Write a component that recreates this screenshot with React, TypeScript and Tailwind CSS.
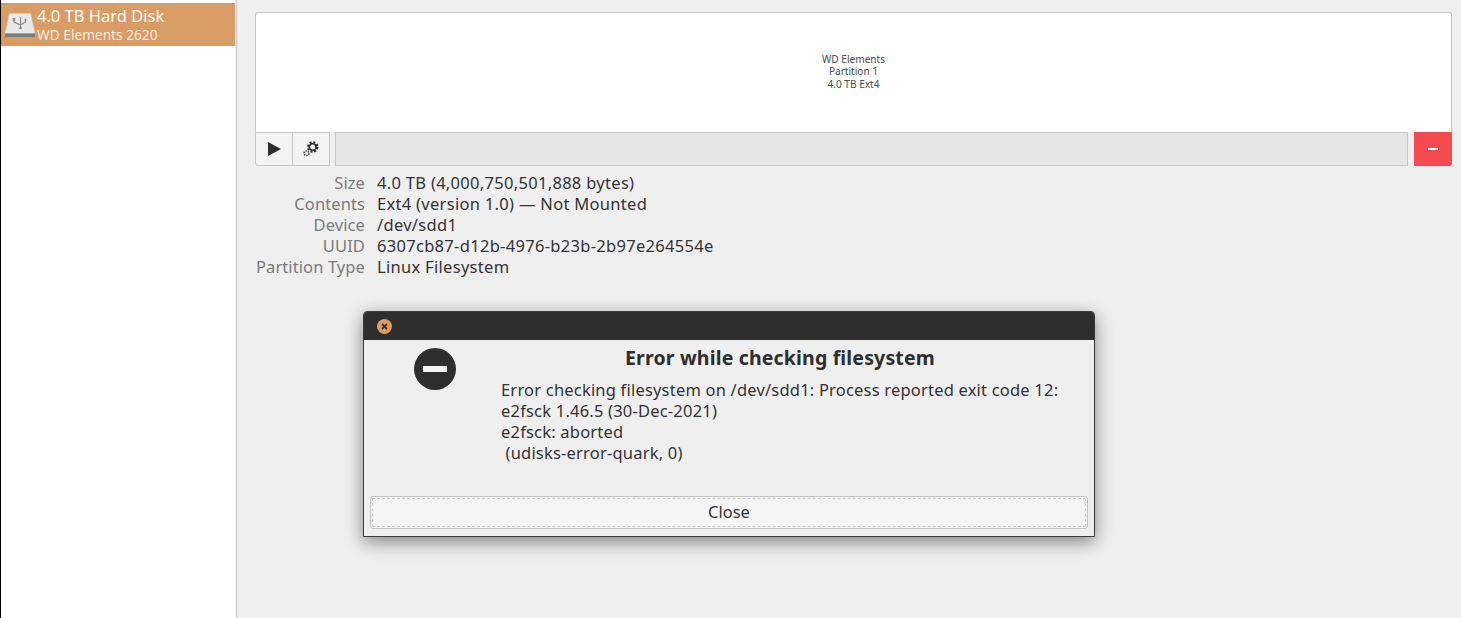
import React from 'react';

const FONT = "font-['Noto_Sans','Open_Sans',sans-serif]";

const details: [string, string][] = [
  ['Size', '4.0 TB (4,000,750,501,888 bytes)'],
  ['Contents', 'Ext4 (version 1.0) — Not Mounted'],
  ['Device', '/dev/sdd1'],
  ['UUID', '6307cb87-d12b-4976-b23b-2b97e264554e'],
  ['Partition Type', 'Linux Filesystem'],
];

const DriveIcon = () => (
  <svg width="32" height="28" viewBox="0 0 32 28" className="shrink-0">
    <path d="M5.500 2.500h21l4.500 20H1z" fill="#e8e8e8" stroke="#d4d4d4" strokeWidth="0.6" />
    <rect x="1" y="22.500" width="30" height="3.500" rx="1" fill="#7a7a7a" />
    <path d="M16.500 6v10M10 8.500v2.500l6.500 3 5-3V9" fill="none" stroke="#8a8a8a" strokeWidth="1.2" />
    <circle cx="16.500" cy="17" r="1.300" fill="#8a8a8a" />
    <rect x="8.800" y="7" width="2.400" height="2.400" fill="#8a8a8a" />
    <circle cx="21.500" cy="8.500" r="1.100" fill="#8a8a8a" />
  </svg>
);

const GearsIcon = () => (
  <svg width="16" height="16" viewBox="0 0 16 16">
    <circle cx="9.700" cy="6" r="4.600" fill="none" stroke="#2d2d2d" strokeWidth="2.400" strokeDasharray="2 1.610" />
    <circle cx="9.700" cy="6" r="3.300" fill="none" stroke="#2d2d2d" strokeWidth="1.600" />
    <circle cx="3.500" cy="12.300" r="2.300" fill="none" stroke="#444" strokeWidth="1.700" strokeDasharray="1.300 0.900" />
  </svg>
);

const PlayIcon = () => (
  <svg width="13" height="14" viewBox="0 0 13 14">
    <path d="M0 0l13 7-13 7z" fill="#2d2d2d" />
  </svg>
);

const CloseDot = () => (
  <svg width="15" height="15" viewBox="0 0 15 15">
    <circle cx="7.500" cy="7.500" r="7.500" fill="#db9a5f" />
    <path d="M5 5l5 5M10 5l-5 5" stroke="#3a3026" strokeWidth="1.800" />
  </svg>
);

export default function App() {
  return (
    <div className={`${FONT} relative flex h-[618px] w-[1461px] overflow-hidden bg-[#efefef] text-[#3d3d3d]`}>
      {/* Sidebar */}
      <aside className="w-[237px] shrink-0 border-l border-r border-l-black border-r-[#c4c4c4] bg-white pt-[3px]">
        <div className="flex h-[43px] w-[234px] items-center gap-[1px] bg-[#da9c65] pl-[3px] text-white">
          <DriveIcon />
          <div className="flex flex-col">
            <span className="text-[16.5px] leading-[20px]">4.0 TB Hard Disk</span>
            <span className="text-[13.7px] leading-[18px] text-[#f8ece0]">WD Elements 2620</span>
          </div>
        </div>
      </aside>

      {/* Main */}
      <main className="flex-1 pl-[18px] pr-[9px] pt-[12px]">
        <div className="flex h-[120px] flex-col items-center rounded-t-[3px] border border-b-0 border-[#c6c6c6] bg-white pt-[40px] text-[10.1px] leading-[12.4px] text-[#4a4a4a]">
          <span>WD Elements</span>
          <span>Partition 1</span>
          <span>4.0 TB Ext4</span>
        </div>

        <div className="flex h-[34px] items-stretch">
          <div className="flex rounded-bl-[3px] border border-[#c6c6c6] bg-[#f3f3f3]">
            <div className="flex w-[37px] items-center justify-center border-r border-[#c6c6c6]">
              <PlayIcon />
            </div>
            <div className="flex w-[36px] items-center justify-center">
              <GearsIcon />
            </div>
          </div>
          <div className="ml-[5px] flex-1 border border-[#c6c6c6] bg-[#e6e6e6]" />
          <div className="ml-[6px] flex w-[38px] items-center justify-center rounded-br-[3px] bg-[#f44a50]">
            <div className="h-[2px] w-[10px] bg-white" />
          </div>
        </div>

        <dl className="mt-[6px] grid grid-cols-[110px_1fr] gap-x-[12px] text-[16.5px] leading-[21px]">
          {details.map(([label, value]) => (
            <React.Fragment key={label}>
              <dt className="text-right text-[#7b7b7b] tracking-[0.1px]">{label}</dt>
              <dd className="text-[#333] tracking-[0.3px]">{value}</dd>
            </React.Fragment>
          ))}
        </dl>
      </main>

      {/* Dialog */}
      <div className="absolute left-[363px] top-[311px] flex h-[226px] w-[732px] flex-col overflow-hidden rounded-t-[4px] border border-[#3a3a3a] bg-[#efefef] shadow-[0_5px_18px_rgba(0,0,0,0.45)]">
        <div className="flex h-[28px] shrink-0 items-center bg-[#2e2e2e] pl-[13px]">
          <CloseDot />
        </div>
        <div className="flex flex-1">
          <div className="flex w-[137px] shrink-0 justify-end pt-[8px] pr-[45px]">
            <div className="flex h-[42px] w-[42px] items-center justify-center rounded-full bg-[#2e2e2e]">
              <div className="h-[6px] w-[24px] bg-[#f4f4f4]" />
            </div>
          </div>
          <div className="flex-1 pt-[5px] text-[16.5px] leading-[21px] tracking-[0.2px] text-[#333]">
            <h2 className="w-[558px] text-center text-[19.5px] font-bold leading-[25px] tracking-[0.17px] text-[#2e2e2e]">
              Error while checking filesystem
            </h2>
            <p className="mt-[9px]">Error checking filesystem on /dev/sdd1: Process reported exit code 12:</p>
            <p>e2fsck 1.46.5 (30-Dec-2021)</p>
            <p>e2fsck: aborted</p>
            <p className="whitespace-pre"> (udisks-error-quark, 0)</p>
          </div>
        </div>
        <div className="mx-[6px] mb-[7px] flex h-[33px] items-center justify-center rounded-[3px] border border-[#c4c4c4] bg-[#f5f5f5] text-[16.5px] text-[#333] outline-1 -outline-offset-3 outline-dashed outline-[#c8c8c8]">
          Close
        </div>
      </div>
    </div>
  );
}
